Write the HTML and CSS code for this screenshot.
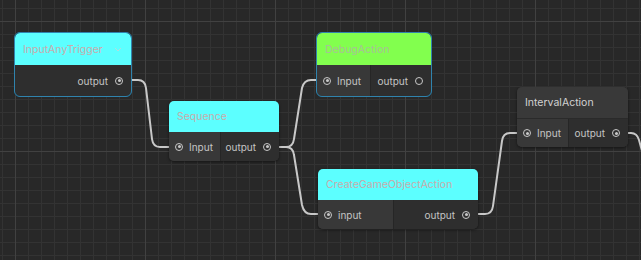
FILE: index.html
```html
<!DOCTYPE html>
<html>
<head>
<meta charset="utf-8">
<link rel="stylesheet" href="styles.css">
</head>
<body>
<div class="canvas">
  <svg class="edges" width="641" height="260" viewBox="0 0 641 260">
    <path d="M125,80 L138,80 Q145,80 146,88 L152,139 Q153,147 160,147 L170,147"/>
    <path d="M274,147 L286,147 Q293,147 294,139 L302,88 Q304,80 311,80 L322,80"/>
    <path d="M274,147 L286,147 Q293,147 294,155 L302,205 Q304,214 311,214 L323,214"/>
    <path d="M473,214 L485,214 Q492,214 493,206 L502,141 Q503,133 510,133 L522,133"/>
    <path d="M622,133 L631,133 Q637,133 639,140 L644,158"/>
  </svg>

  <div class="node selected n-trigger">
    <div class="head cyan"><span class="title">InputAnyTrigger</span><svg class="chev" width="8" height="5" viewBox="0 0 8 5"><path d="M1,1 L4,4 L7,1"/></svg></div>
    <div class="body">
      <div class="out only"><span>output</span><i class="port on"></i></div>
    </div>
  </div>

  <div class="node n-seq">
    <div class="head cyan"><span class="title">Sequence</span></div>
    <div class="body">
      <div class="in w51"><i class="port on"></i><span>Input</span></div>
      <div class="out"><span>output</span><i class="port on"></i></div>
    </div>
  </div>

  <div class="node selected n-debug">
    <div class="head green"><span class="title">DebugAction</span></div>
    <div class="body">
      <div class="in w54"><i class="port on"></i><span>Input</span></div>
      <div class="out"><span>output</span><i class="port"></i></div>
    </div>
  </div>

  <div class="node n-create">
    <div class="head cyan"><span class="title">CreateGameObjectAction</span></div>
    <div class="body">
      <div class="in w76"><i class="port on"></i><span>input</span></div>
      <div class="out"><span>output</span><i class="port on"></i></div>
    </div>
  </div>

  <div class="node n-interval">
    <div class="head gray"><span class="title">IntervalAction</span></div>
    <div class="body">
      <div class="in w51"><i class="port on"></i><span>Input</span></div>
      <div class="out"><span>output</span><i class="port on"></i></div>
    </div>
  </div>
</div>
</body>
</html>
```
FILE: styles.css
```css
html, body {
  margin: 0;
  padding: 0;
}
body {
  width: 641px;
  height: 260px;
  overflow: hidden;
  font-family: Inter, "Noto Sans", sans-serif;
}
.canvas {
  position: relative;
  width: 641px;
  height: 260px;
  background-color: #282828;
  background-image:
    linear-gradient(to right, #414141 1px, transparent 1px),
    linear-gradient(to bottom, #414141 1px, transparent 1px),
    linear-gradient(to right, #333333 1px, transparent 1px),
    linear-gradient(to bottom, #333333 1px, transparent 1px);
  background-size: 130px 130px, 130px 130px, 13px 13px, 13px 13px;
  background-position: 15px 21px, 15px 21px, 2px 8px, 2px 8px;
  overflow: hidden;
}
.edges {
  position: absolute;
  left: 0;
  top: 0;
}
.edges path {
  fill: none;
  stroke: #c8c8c8;
  stroke-width: 2;
}
.node {
  position: absolute;
  display: flex;
  flex-direction: column;
  border-radius: 5px;
  background: #2e2e2e;
  box-shadow: 0 1px 3px rgba(0,0,0,0.5);
  overflow: hidden;
}
.node.selected {
  outline: 1px solid #3083ad;
  outline-offset: 0;
  box-shadow: 0 0 0 1px #173b4b;
}
.head {
  display: flex;
  align-items: center;
  justify-content: space-between;
  padding: 0 8px;
  font-size: 10.5px;
  flex: 0 0 auto;
}
.head.cyan { background: #5cffff; color: #c8acac; }
.head.green { background: #82ff4e; color: #a8bf98; }
.head.gray { background: #393939; color: #d2d2d2; border-bottom: 1px solid #2a2a2a; }
.chev { margin-right: 1px; }
.chev path { fill: none; stroke: #b4dcdc; stroke-width: 1; }
.body {
  flex: 1;
  display: flex;
  background: #2e2e2e;
  font-size: 10px;
  color: #c4c4c4;
}
.in {
  display: flex;
  align-items: center;
  gap: 6px;
  padding-left: 6px;
  background: #383838;
  border-right: 1px solid #262626;
}
.w51 { width: 45px; }
.w54 { width: 47px; }
.w76 { width: 69px; }
.out {
  flex: 1;
  display: flex;
  align-items: center;
  justify-content: flex-end;
  gap: 7px;
  padding-right: 8px;
}
.port {
  width: 6px;
  height: 6px;
  border: 1px solid #c8c8c8;
  border-radius: 50%;
  box-sizing: content-box;
  position: relative;
}
.port.on::after {
  content: "";
  position: absolute;
  left: 1.5px;
  top: 1.5px;
  width: 3px;
  height: 3px;
  border-radius: 50%;
  background: #c8c8c8;
}
.n-trigger { left: 15px; top: 33px; width: 116px; height: 63px; }
.n-trigger .head { height: 32px; }
.n-seq { left: 169px; top: 101px; width: 110px; height: 60px; }
.n-seq .head { height: 31px; }
.n-debug { left: 317px; top: 33px; width: 114px; height: 63px; }
.n-debug .head { height: 32px; }
.n-create { left: 318px; top: 169px; width: 160px; height: 60px; }
.n-create .head { height: 31px; }
.n-interval { left: 517px; top: 87px; width: 111px; height: 60px; }
.n-interval .head { height: 31px; }
```
